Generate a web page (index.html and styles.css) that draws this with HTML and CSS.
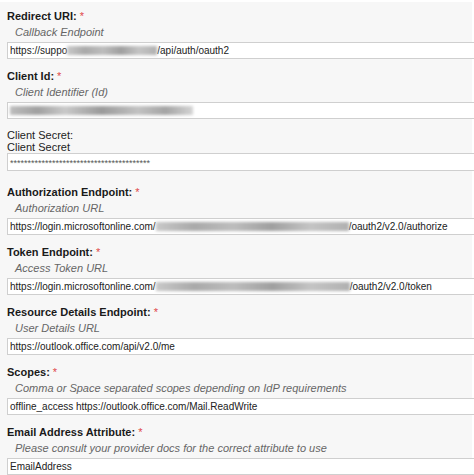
FILE: index.html
```html
<!DOCTYPE html>
<html>
<head>
<meta charset="utf-8">
<link rel="stylesheet" href="styles.css">
</head>
<body>
<div class="form">
  <div class="group">
    <div class="label">Redirect URI: <span class="req">*</span></div>
    <div class="hint">Callback Endpoint</div>
    <div class="field">https://suppo<span class="redact r1"></span>/api/auth/oauth2</div>
  </div>
  <div class="group">
    <div class="label">Client Id: <span class="req">*</span></div>
    <div class="hint">Client Identifier (Id)</div>
    <div class="field"><span class="redact r2"></span></div>
  </div>
  <div class="group plain">
    <div class="plain-line">Client Secret:</div>
    <div class="plain-line">Client Secret</div>
    <div class="field secret">****************************************</div>
  </div>
  <div class="group">
    <div class="label">Authorization Endpoint: <span class="req">*</span></div>
    <div class="hint">Authorization URL</div>
    <div class="field">https://login.microsoftonline.com/<span class="redact r3"></span>/oauth2/v2.0/authorize</div>
  </div>
  <div class="group">
    <div class="label">Token Endpoint: <span class="req">*</span></div>
    <div class="hint">Access Token URL</div>
    <div class="field">https://login.microsoftonline.com/<span class="redact r4"></span>/oauth2/v2.0/token</div>
  </div>
  <div class="group">
    <div class="label">Resource Details Endpoint: <span class="req">*</span></div>
    <div class="hint">User Details URL</div>
    <div class="field">https://outlook.office.com/api/v2.0/me</div>
  </div>
  <div class="group">
    <div class="label">Scopes: <span class="req">*</span></div>
    <div class="hint">Comma or Space separated scopes depending on IdP requirements</div>
    <div class="field">offline_access https://outlook.office.com/Mail.ReadWrite</div>
  </div>
  <div class="group">
    <div class="label">Email Address Attribute: <span class="req">*</span></div>
    <div class="hint">Please consult your provider docs for the correct attribute to use</div>
    <div class="field">EmailAddress</div>
  </div>
</div>
</body>
</html>
```

FILE: styles.css
```css
html, body {
  margin: 0;
  padding: 0;
  background: #ffffff;
  overflow: hidden;
}
body {
  font-family: "Liberation Sans", Arial, sans-serif;
  font-size: 11px;
  color: #222;
}
.form {
  margin-top: 2px;
  width: 465px;
  height: 480px;
  padding: 6px 0 0 7px;
  background: #f7f7f7;
}
.group {
  margin-bottom: 9px;
}
.label {
  font-weight: bold;
  line-height: 16px;
  color: #1a1a1a;
}
.req {
  color: #e04848;
  font-weight: normal;
}
.hint {
  font-style: italic;
  color: #666;
  line-height: 16px;
  padding-left: 8px;
}
.field {
  margin-top: 2px;
  width: 480px;
  height: 15px;
  line-height: 15px;
  font-size: 10px;
  border: 1px solid #cfcfcf;
  border-right: none;
  background: #fff;
  padding-left: 2px;
  color: #222;
  white-space: nowrap;
  overflow: hidden;
}
.plain {
  padding-top: 1px;
  margin-bottom: 13px;
}
.plain-line {
  line-height: 12px;
  color: #222;
}
.plain .field {
  margin-top: 0;
  height: 16px;
}
.secret {
  font-size: 9px;
  line-height: 18px;
  color: #555;
}
.redact {
  display: inline-block;
  height: 9px;
  vertical-align: -1px;
  background: linear-gradient(90deg, #c8c8c8, #a9a9a9 20%, #bdbdbd 40%, #9f9f9f 60%, #c4c4c4 80%, #b0b0b0);
  filter: blur(1.5px);
}
.r1 { width: 90px; }
.r2 { width: 183px; background: linear-gradient(90deg, #bdbdbd, #a0a0a0 15%, #c9c9c9 30%, #9a9a9a 50%, #c2c2c2 70%, #a4a4a4 85%, #d4d4d4); }
.r3 { width: 193px; }
.r4 { width: 194px; }
```
